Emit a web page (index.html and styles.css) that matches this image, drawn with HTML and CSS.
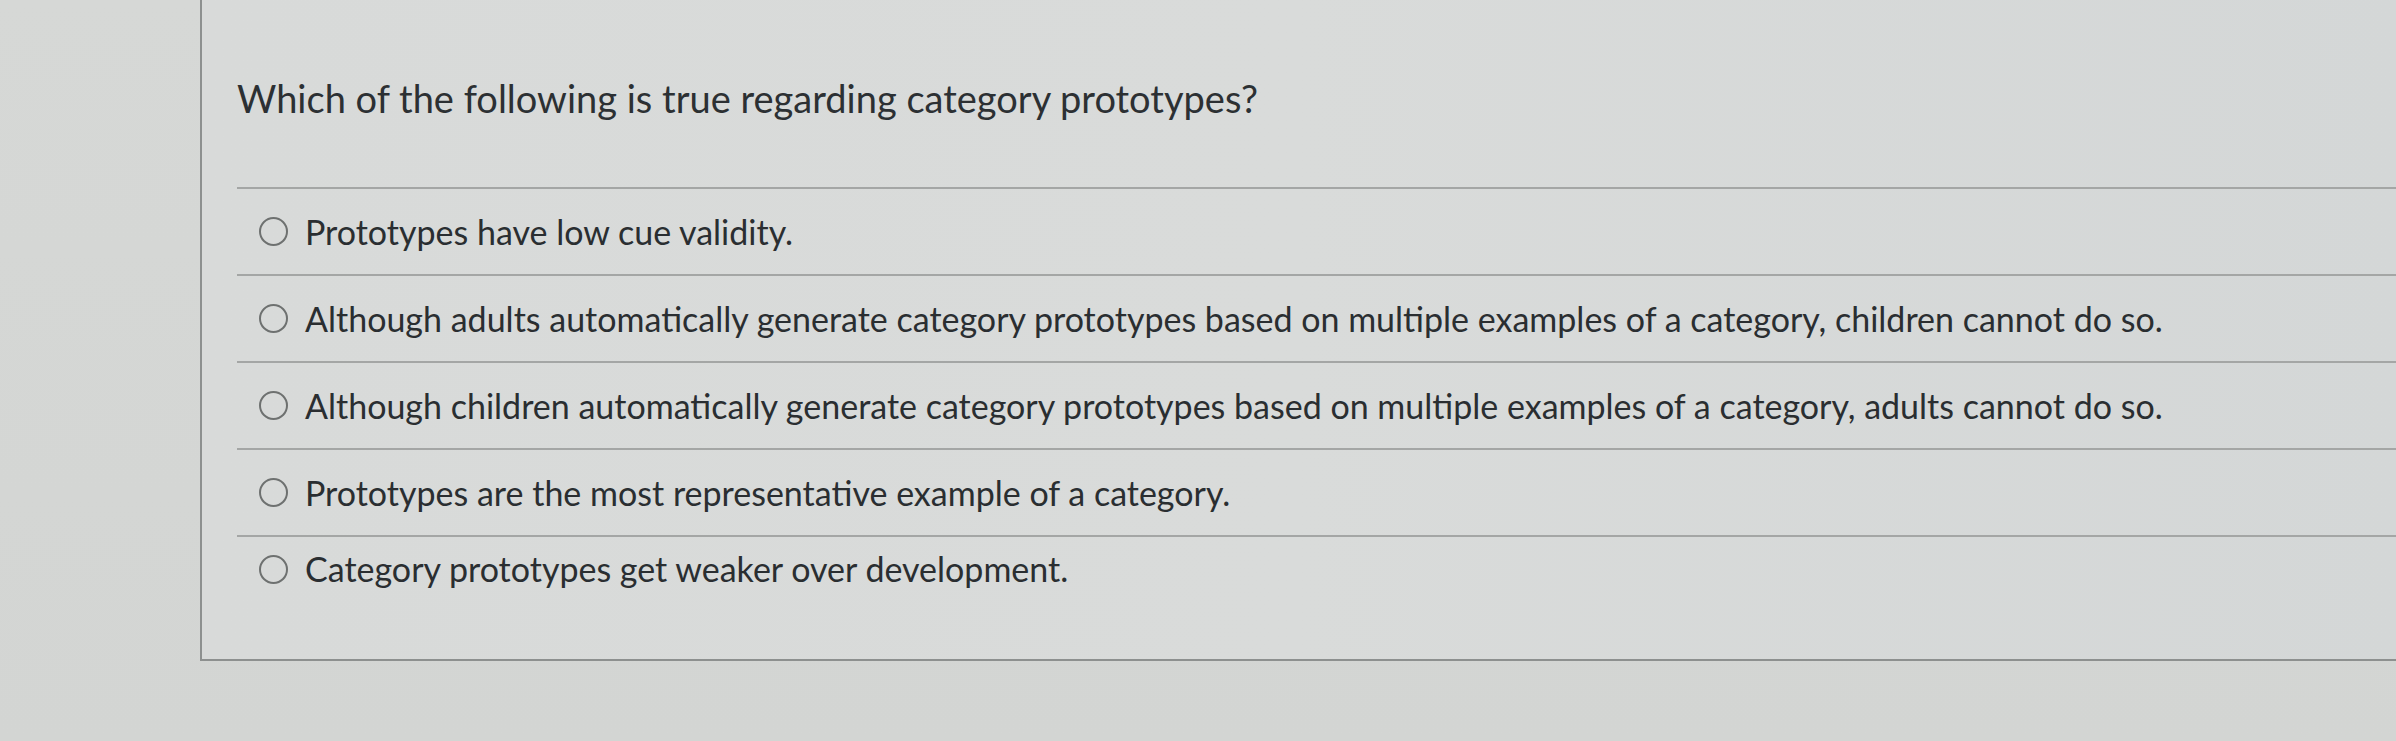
FILE: index.html
```html
<!DOCTYPE html>
<html lang="en">
<head>
<meta charset="utf-8">
<title>Quiz question</title>
<link rel="stylesheet" href="styles.css">
</head>
<body>
<div class="panel">
  <div class="question">Which of the following is true regarding category prototypes?</div>
  <ul class="answers">
    <li class="answer"><span class="radio"></span><span class="label">Prototypes have low cue validity.</span></li>
    <li class="answer"><span class="radio"></span><span class="label">Although adults automatically generate category prototypes based on multiple examples of a category, children cannot do so.</span></li>
    <li class="answer"><span class="radio"></span><span class="label">Although children automatically generate category prototypes based on multiple examples of a category, adults cannot do so.</span></li>
    <li class="answer"><span class="radio"></span><span class="label">Prototypes are the most representative example of a category.</span></li>
    <li class="answer"><span class="radio"></span><span class="label">Category prototypes get weaker over development.</span></li>
  </ul>
</div>
</body>
</html>
```
FILE: styles.css
```css
html, body {
  margin: 0;
  padding: 0;
}
body {
  width: 2396px;
  height: 741px;
  overflow: hidden;
  background: linear-gradient(180deg, #d6d8d6 0%, #d3d5d3 100%);
  font-family: Lato, "Open Sans", "Liberation Sans", sans-serif;
  color: #2a2e31;
}
.panel {
  margin-left: 200px;
  box-sizing: border-box;
  height: 661px;
  padding: 74px 0 0 35px;
  border-left: 2px solid #8d908f;
  border-bottom: 2px solid #8d908f;
  background: linear-gradient(90deg, #d8dad9 0%, #d9dbda 50%, #d4d7d7 100%);
}
.question {
  font-size: 38px;
  line-height: 48px;
  margin: 0 0 65px 0;
  color: #2c3033;
}
.answers {
  list-style: none;
  margin: 0;
  padding: 0;
  border-top: 2px solid #a4a6a5;
}
.answer {
  height: 85px;
  display: flex;
  align-items: center;
  border-bottom: 2px solid #a4a6a5;
  padding-left: 22px;
}
.answer:last-child {
  border-bottom: none;
  align-items: flex-start;
  padding-top: 12px;
  box-sizing: border-box;
}
.radio {
  width: 25px;
  height: 25px;
  border: 2px solid #6e7170;
  border-radius: 50%;
  flex: none;
  margin-right: 17px;
}
.answer:last-child .radio {
  margin-top: 6px;
}
.label {
  font-size: 34px;
  line-height: 40px;
  white-space: nowrap;
}
```
